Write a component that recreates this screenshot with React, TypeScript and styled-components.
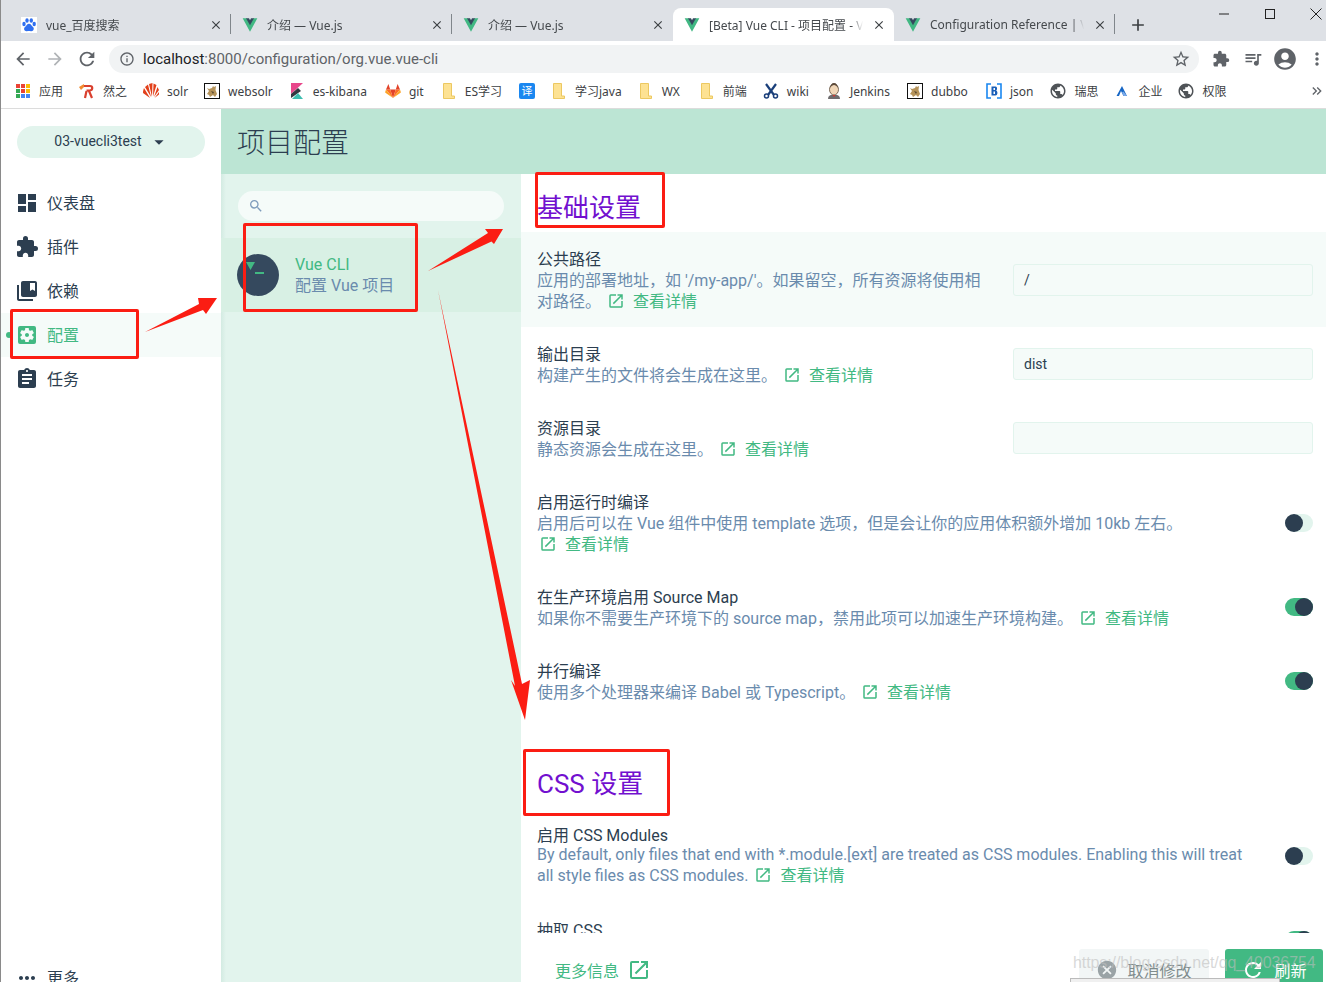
import React from "react";
import styled, { createGlobalStyle } from "styled-components";
import {
  MdDashboard, MdExtension, MdCollectionsBookmark, MdSettingsApplications, MdAssignment, MdMoreHoriz,
  MdOpenInNew, MdSearch, MdRefresh, MdCancel, MdClose, MdArrowBack, MdArrowForward, MdInfoOutline,
  MdStarBorder, MdQueueMusic, MdAccountCircle, MdMoreVert, MdAdd, MdArrowDropDown, MdPublic, MdKeyboardDoubleArrowRight,
} from "react-icons/md";

const Global = createGlobalStyle`
  html, body { margin: 0; padding: 0; height: 982px; overflow: hidden; background: #fff; }
  * { box-sizing: border-box; }
  #root { height: 982px; }
`;

const FONT = `Roboto, "Noto Sans CJK SC", sans-serif`;
const UIFONT = `"Noto Sans", "Noto Sans CJK SC", sans-serif`;

const Root = styled.div`
  position: relative;
  width: 1326px;
  height: 982px;
  overflow: hidden;
  display: flex;
  flex-direction: column;
  font-family: ${FONT};
  color: #2c3e50;
  &::before {
    content: "";
    position: absolute;
    left: 0; top: 0; bottom: 0;
    width: 1px;
    background: #8a8a8a;
    z-index: 5;
  }
`;

/* browser chrome */
const TabBar = styled.div`
  height: 41px;
  flex: none;
  background: #dee1e6;
  display: flex;
  align-items: flex-end;
  padding-left: 10px;
`;
const Tab = styled.div<{ $active?: boolean; $noSep?: boolean }>`
  position: relative;
  width: 221px;
  height: 33px;
  display: flex;
  align-items: center;
  padding: 0 8px 0 11px;
  gap: 9px;
  font: 12px ${UIFONT};
  color: #45494d;
  background: ${(p) => (p.$active ? "#fff" : "transparent")};
  border-radius: 8px 8px 0 0;
  &::after {
    content: "";
    position: absolute;
    right: 0; top: 6px;
    height: 20px;
    width: 1px;
    background: ${(p) => (p.$noSep ? "transparent" : "#80868b")};
  }
`;
const TabTitle = styled.span`
  flex: 1;
  min-width: 0;
  white-space: nowrap;
  overflow: hidden;
  mask-image: linear-gradient(90deg, #000 calc(100% - 12px), transparent);
`;
const TabClose = styled(MdClose)`
  flex: none;
  color: #3c4043;
`;
const NewTab = styled.div`
  width: 46px;
  height: 33px;
  display: flex;
  align-items: center;
  justify-content: center;
  color: #3c4043;
`;
const WinControls = styled.div`
  margin-left: auto;
  margin-right: -13px;
  align-self: flex-start;
  display: flex;
`;
const WinBtn = styled.div`
  width: 46px;
  height: 27px;
  display: flex;
  align-items: center;
  justify-content: center;
  color: #222;
`;
const Toolbar = styled.div`
  height: 34px;
  flex: none;
  display: flex;
  align-items: flex-start;
  padding: 4px 0 0 7px;
  background: #fff;
  position: relative;
`;
const NavBtn = styled.div<{ $muted?: boolean }>`
  width: 32px;
  height: 28px;
  flex: none;
  display: flex;
  align-items: center;
  justify-content: center;
  color: ${(p) => (p.$muted ? "#b0b3b6" : "#5f6368")};
`;
const AddressBar = styled.div`
  margin-left: 6px;
  width: 1090px;
  flex: none;
  height: 28px;
  border-radius: 14px;
  background: #f1f3f4;
  display: flex;
  align-items: center;
  padding: 0 8px 0 10px;
  gap: 8px;
  color: #5f6368;
`;
const Url = styled.div`
  flex: 1;
  font: 15px ${FONT};
  color: #5f6368;
  white-space: nowrap;
  b { font-weight: 400; color: #202124; }
`;
const ToolIcons = styled.div`
  display: flex;
  flex: none;
  align-items: center;
  height: 28px;
  margin-left: 6px;
  color: #5f6368;
`;
const ToolIcon = styled.div`
  width: 32px;
  display: flex;
  justify-content: center;
`;
const BookmarkBar = styled.div`
  height: 34px;
  flex: none;
  background: #fff;
  border-bottom: 1px solid #dcdcdc;
  display: flex;
  align-items: center;
  padding: 0 0 1px 15px;
  position: relative;
`;
const Bookmark = styled.div<{ $gap?: number }>`
  display: flex;
  align-items: center;
  gap: 8px;
  font: 12px ${UIFONT};
  color: #3c4043;
  margin-right: ${(p) => p.$gap ?? 17}px;
  white-space: nowrap;
`;
const BookmarkMore = styled.div`
  position: absolute;
  right: 1px;
  top: 8px;
  color: #5f6368;
  display: flex;
`;

const Fav = styled.svg`
  flex: none;
  display: block;
`;
const Translate = styled.span`
  width: 16px;
  height: 16px;
  flex: none;
  border-radius: 2px;
  background: #1a87f0;
  color: #fff;
  font-size: 11px;
  line-height: 16px;
  text-align: center;
`;

/* page */
const Page = styled.div`
  flex: 1;
  min-height: 0;
  display: flex;
`;
const Sidebar = styled.nav`
  width: 221px;
  flex: none;
  overflow: hidden;
  padding-top: 17px;
`;
const ProjectSelect = styled.div`
  margin: 0 16px 23px 17px;
  height: 32px;
  border-radius: 16px;
  background: #e2f4ed;
  display: flex;
  align-items: center;
  justify-content: center;
  font-size: 14px;
  padding-left: 2px;
  gap: 6px;
`;
const ProjectName = styled.span`
  padding-bottom: 2px;
`;
const NavItem = styled.div<{ $active?: boolean; $push?: number }>`
  position: relative;
  height: 44px;
  display: flex;
  align-items: center;
  padding-left: 15px;
  gap: 8px;
  font-size: 16px;
  margin-top: ${(p) => p.$push ?? 0}px;
  color: ${(p) => (p.$active ? "#42b983" : "#2c3e50")};
  background: ${(p) => (p.$active ? "#f5fbf9" : "transparent")};
  ${(p) =>
    p.$active
      ? `&::before { content: ""; position: absolute; left: 6px; top: 19px; width: 6px; height: 6px; border-radius: 50%; background: #42b983; }`
      : ""}
`;
const NavLabel = styled.span`
  padding-bottom: 2px;
`;
const Main = styled.main`
  flex: 1;
  min-width: 0;
  display: flex;
  flex-direction: column;
`;
const Header = styled.header`
  height: 65px;
  flex: none;
  background: #bce5d4;
  display: flex;
  align-items: center;
  padding: 0 0 2px 16px;
  font-size: 28px;
  font-weight: 300;
  color: #2c3e50;
`;
const Body = styled.div`
  flex: 1;
  min-height: 0;
  display: flex;
`;
const ListPane = styled.aside`
  width: 300px;
  flex: none;
  background: linear-gradient(90deg, #d3ebe2 0, #e2f4ed 5px);
  padding-top: 17px;
`;
const SearchBox = styled.div`
  margin: 0 17px 17px 17px;
  height: 30px;
  border-radius: 15px;
  background: #f5fbf9;
  display: flex;
  align-items: center;
  padding-left: 10px;
  color: #7f9cbc;
`;
const ListItem = styled.div`
  height: 74px;
  background: #d8f0e4;
  display: flex;
  align-items: center;
  padding-left: 16px;
  gap: 16px;
`;
const ItemText = styled.div`
  font-size: 16px;
  line-height: 21px;
`;
const ItemName = styled.div`
  color: #42b983;
`;
const ItemDesc = styled.div`
  color: #6a8bad;
`;
const Content = styled.section`
  flex: 1;
  min-width: 0;
  display: flex;
  flex-direction: column;
`;
const Scroll = styled.div`
  flex: 1;
  min-height: 0;
  overflow: hidden;
`;
const SectionTitle = styled.h2<{ $gap?: number }>`
  margin: ${(p) => p.$gap ?? 0}px 0 0;
  padding: 17px 16px 7px;
  font-size: 26px;
  line-height: 34px;
  font-weight: 400;
  color: #7210cf;
`;
const Row = styled.div<{ $selected?: boolean }>`
  display: flex;
  align-items: center;
  padding: 17px 13px 15px 16px;
  background: ${(p) => (p.$selected ? "#f5fbf9" : "transparent")};
`;
const RowText = styled.div`
  flex: 1;
  min-width: 0;
  margin-right: 24px;
  font-size: 16px;
  line-height: 21px;
`;
const RowTitle = styled.div`
  color: #2c3e50;
`;
const RowDesc = styled.div<{ $latin?: boolean }>`
  color: #6a8bad;
  margin: ${(p) => (p.$latin ? "-2px 0 2px" : "0")};
`;
const MoreLink = styled.span`
  color: #42b983;
  white-space: nowrap;
  svg {
    vertical-align: -3px;
    margin: 0 4px 0 2px;
  }
`;
const Input = styled.div`
  width: 300px;
  flex: none;
  height: 32px;
  margin-bottom: 2px;
  background: #f5fbf9;
  border: 1px solid #e2f4ed;
  border-radius: 3px;
  padding: 0 10px;
  font-size: 14px;
  line-height: 30px;
  color: #2c3e50;
`;
const Toggle = styled.div<{ $on?: boolean }>`
  width: 28px;
  height: 18px;
  margin-bottom: 2px;
  flex: none;
  border-radius: 9px;
  background: ${(p) => (p.$on ? "#42b983" : "#e2f4ed")};
  display: flex;
  justify-content: ${(p) => (p.$on ? "flex-end" : "flex-start")};
  &::after {
    content: "";
    width: 18px;
    height: 18px;
    border-radius: 50%;
    background: #2c3e50;
  }
`;
const Footer = styled.footer`
  height: 49px;
  flex: none;
  display: flex;
  align-items: flex-start;
  padding: 16px 3px 0 34px;
  gap: 16px;
`;
const FooterLink = styled.div`
  margin-right: auto;
  height: 42px;
  display: flex;
  align-items: center;
  gap: 8px;
  font-size: 16px;
  color: #42b983;
`;
const Button = styled.div<{ $primary?: boolean }>`
  width: ${(p) => (p.$primary ? 98 : 130)}px;
  height: 42px;
  border-radius: 3px;
  display: flex;
  align-items: center;
  justify-content: center;
  gap: 9px;
  font-size: 16px;
  background: ${(p) => (p.$primary ? "#42b983" : "#f2f6f6")};
  color: ${(p) => (p.$primary ? "#fff" : "#7f8c8d")};
`;

/* over-the-top annotations */
const RedBox = styled.div<{ $l: number; $t: number; $w: number; $h: number }>`
  position: absolute;
  left: ${(p) => p.$l}px;
  top: ${(p) => p.$t}px;
  width: ${(p) => p.$w}px;
  height: ${(p) => p.$h}px;
  border: 3px solid #fb1d13;
  border-radius: 2px;
  z-index: 3;
`;
const Arrows = styled.svg`
  position: absolute;
  left: 0;
  top: 0;
  z-index: 3;
  pointer-events: none;
`;
const Watermark = styled.div`
  position: absolute;
  left: 1073px;
  top: 953px;
  font: 16px/20px "Liberation Sans", sans-serif;
  letter-spacing: -0.09px;
  color: rgba(190, 190, 190, 0.6);
  white-space: nowrap;
  z-index: 4;
`;
const TaskStrip = styled.div`
  position: absolute;
  left: 1070px;
  top: 978px;
  width: 210px;
  height: 10px;
  background: #f0f0f0;
  border: 1px solid #bbb;
  z-index: 4;
`;

/* favicons */
const VueIcon = () => (
  <Fav width="16" height="16" viewBox="0 0 24 24">
    <path fill="#41b883" d="M1 2h6l5 8.6L17 2h6L12 22z" />
    <path fill="#35495e" d="M6 2h4.5L12 5l1.500-3H18l-6 10.500z" />
  </Fav>
);
const BaiduIcon = () => (
  <Fav width="16" height="16" viewBox="0 0 16 16">
    <rect width="16" height="16" fill="#fff" />
    <g fill="#2f6ff0">
      <ellipse cx="3" cy="7" rx="1.700" ry="2.200" />
      <ellipse cx="6" cy="3.500" rx="1.700" ry="2.300" />
      <ellipse cx="10.300" cy="3.500" rx="1.700" ry="2.300" />
      <ellipse cx="13.200" cy="7" rx="1.700" ry="2.200" />
      <path d="M8 6.800c2 0 2.500 2 4 3.200 1.600 1.400.6 4.500-2 4.200-1.200-.2-2.500-.4-4 0-2.700.4-3.800-2.600-2-4.200C5.500 8.800 6 6.800 8 6.800z" />
    </g>
  </Fav>
);
const AppsIcon = () => (
  <Fav width="16" height="16" viewBox="0 0 16 16">
    {[
      ["#ea4335", "#ea4335", "#fbbc04"],
      ["#34a853", "#ea4335", "#fbbc04"],
      ["#34a853", "#4285f4", "#4285f4"],
    ].map((row, y) =>
      row.map((c, x) => <rect key={`${x}${y}`} x={1 + x * 5} y={1 + y * 5} width="4" height="4" fill={c} />),
    )}
  </Fav>
);
const RanzhiIcon = () => (
  <Fav width="16" height="16" viewBox="0 0 16 16">
    <path fill="none" stroke="#d9402f" strokeWidth="2.200" d="M6 15l1.500-7M5 3h6c3 0 3 4 0 4.500H7.500M10 8l3 7" />
    <path fill="#f28b30" d="M0 4l5-3v3L2 7z" />
  </Fav>
);
const SolrIcon = () => (
  <Fav width="16" height="16" viewBox="0 0 16 16">
    <path fill="#e2401b" d="M7 15L0 10c0-2 .500-4 1-5zM8 14L2 4l3-2.500zM9 14L6 1l3.500-1zM10 13.500L10.500 .5l3 1.500zM11 14l3.500-10L16 7zM11.500 15L16 9v2.500z" />
  </Fav>
);
const TomcatIcon = () => (
  <Fav width="16" height="16" viewBox="0 0 16 16">
    <rect x=".5" y=".5" width="15" height="15" fill="#fff" stroke="#111" />
    <path fill="#b5935a" d="M3 5l2 1 3-1 1-2 1 1 2-1-.5 4L13 11l-2 3-2-2-3 2-1-2-2-1 2-3z" />
    <path fill="#5a4a30" d="M7 8l3 1-1 2z" />
  </Fav>
);
const KibanaIcon = () => (
  <Fav width="16" height="16" viewBox="0 0 16 16">
    <path fill="#e8478b" d="M2 0h12L2 11z" />
    <path fill="#343741" d="M2 11L9 5l3 3-10 7z" />
    <path fill="#3ebeb0" d="M3 16l6-6 5 6z" />
  </Fav>
);
const GitlabIcon = () => (
  <Fav width="16" height="16" viewBox="0 0 16 16">
    <path fill="#e24329" d="M8 15L5.200 6.500h5.600z" />
    <path fill="#fc6d26" d="M8 15L1 6.500h4.200zM8 15l7-8.500h-4.200z" />
    <path fill="#fca326" d="M1 6.500L.2 9c-.1.300 0 .500.200.700L8 15zM15 6.500l.8 2.500c.1.300 0 .500-.2.700L8 15z" />
    <path fill="#e24329" d="M1 6.500h4.200L3.400 1zM15 6.500h-4.200L12.600 1z" />
  </Fav>
);
const FolderIcon = () => (
  <Fav width="16" height="16" viewBox="0 0 16 16">
    <path fill="#fde293" stroke="#ecc861" d="M2.500 .5h8v12.500h3v2.500h-11z" />
  </Fav>
);
const ScissorsIcon = () => (
  <Fav width="16" height="16" viewBox="0 0 16 16">
    <path fill="none" stroke="#1a3f7a" strokeWidth="2.200" d="M3 1l8 11M13 1L5 12" />
    <circle cx="3.500" cy="13" r="2" fill="none" stroke="#1a3f7a" strokeWidth="1.500" />
    <circle cx="12.500" cy="13" r="2" fill="none" stroke="#1a3f7a" strokeWidth="1.500" />
  </Fav>
);
const JenkinsIcon = () => (
  <Fav width="16" height="16" viewBox="0 0 16 16">
    <path fill="#6d6b6d" d="M2 16c0-3 2-4 3-4h6c1 0 3 1 3 4z" />
    <ellipse cx="8" cy="6.500" rx="4.500" ry="5.500" fill="#f0d6b7" stroke="#5c4a3a" strokeWidth=".8" />
    <path fill="#5c4a3a" d="M4 5c0-3 2-5 4-5s4 2 4 5c-1-2-3-3-4-3S5 3 4 5z" />
    <path fill="#d33833" d="M6.500 12h3L8 14z" />
  </Fav>
);
const JsonIcon = () => (
  <Fav width="16" height="16" viewBox="0 0 16 16">
    <path fill="none" stroke="#1a87f0" strokeWidth="1.600" d="M5 1H1v14h4M11 1h4v14h-4" />
    <path fill="#1a5fb8" d="M5.500 3.500h4c2 0 2 3.500.5 4 2 .5 2 5-.5 5h-4zM7.500 5v2h1.500V5zm0 3.500V11h1.500V8.500z" fillRule="evenodd" />
  </Fav>
);
const CompanyIcon = () => (
  <Fav width="16" height="16" viewBox="0 0 16 16">
    <path fill="#1666c5" d="M8 3l5 10H9.500L7 8l-2 5H2.500z" />
    <path fill="#7aa9e8" d="M9.500 13L8 9.500l1.500-1L13 13z" />
  </Fav>
);
const GlobeIcon = () => <MdPublic size={18} color="#4f5357" style={{ margin: "-1px" }} />;
const CliIcon = () => (
  <Fav width="42" height="42" viewBox="0 0 42 42">
    <circle cx="21" cy="21" r="21" fill="#35495e" />
    <path fill="#42b983" d="M9 8h9l-4.500 8z" />
    <rect x="18" y="18" width="9" height="2" fill="#42b983" />
  </Fav>
);
const MinimizeIcon = () => (
  <Fav width="12" height="12" viewBox="0 0 12 12"><path d="M1 6h10" stroke="#222" fill="none" /></Fav>
);
const MaximizeIcon = () => (
  <Fav width="12" height="12" viewBox="0 0 12 12"><rect x="1.500" y="1.500" width="9" height="9" stroke="#222" fill="none" /></Fav>
);
const WinCloseIcon = () => (
  <Fav width="12" height="12" viewBox="0 0 12 12"><path d="M.5 .5l11 11M11.500 .5l-11 11" stroke="#222" fill="none" /></Fav>
);

const bookmarks: [React.ReactNode, string, number?][] = [
  [<AppsIcon />, "应用", 16],
  [<RanzhiIcon />, "然之", 16],
  [<SolrIcon />, "solr", 16],
  [<TomcatIcon />, "websolr", 16],
  [<KibanaIcon />, "es-kibana", 18],
  [<GitlabIcon />, "git", 17],
  [<FolderIcon />, "ES学习", 17],
  [<Translate>译</Translate>, "", 16],
  [<FolderIcon />, "学习java", 16],
  [<FolderIcon />, "WX", 19],
  [<FolderIcon />, "前端", 16],
  [<ScissorsIcon />, "wiki", 17],
  [<JenkinsIcon />, "Jenkins", 17],
  [<TomcatIcon />, "dubbo", 18],
  [<JsonIcon />, "json", 17],
  [<GlobeIcon />, "瑞思", 16],
  [<CompanyIcon />, "企业", 16],
  [<GlobeIcon />, "权限"],
];

const Detail = () => (
  <MoreLink>
    <MdOpenInNew size={18} />
    {" "}查看详情
  </MoreLink>
);

export default function App() {
  return (
    <Root>
      <Global />
      <TabBar>
        <Tab>
          <BaiduIcon />
          <TabTitle>vue_百度搜索</TabTitle>
          <TabClose size={14} />
        </Tab>
        <Tab>
          <VueIcon />
          <TabTitle>介绍 — Vue.js</TabTitle>
          <TabClose size={14} />
        </Tab>
        <Tab $noSep>
          <VueIcon />
          <TabTitle>介绍 — Vue.js</TabTitle>
          <TabClose size={14} />
        </Tab>
        <Tab $active $noSep>
          <VueIcon />
          <TabTitle>[Beta] Vue CLI - 项目配置 - V</TabTitle>
          <TabClose size={14} />
        </Tab>
        <Tab>
          <VueIcon />
          <TabTitle>Configuration Reference | V</TabTitle>
          <TabClose size={14} />
        </Tab>
        <NewTab>
          <MdAdd size={20} />
        </NewTab>
        <WinControls>
          <WinBtn><MinimizeIcon /></WinBtn>
          <WinBtn><MaximizeIcon /></WinBtn>
          <WinBtn><WinCloseIcon /></WinBtn>
        </WinControls>
      </TabBar>
      <Toolbar>
        <NavBtn><MdArrowBack size={20} /></NavBtn>
        <NavBtn $muted><MdArrowForward size={20} /></NavBtn>
        <NavBtn><MdRefresh size={22} /></NavBtn>
        <AddressBar>
          <MdInfoOutline size={16} />
          <Url><b>localhost</b>:8000/configuration/org.vue.vue-cli</Url>
          <MdStarBorder size={20} />
        </AddressBar>
        <ToolIcons>
          <ToolIcon><MdExtension size={18} /></ToolIcon>
          <ToolIcon><MdQueueMusic size={20} /></ToolIcon>
          <ToolIcon><MdAccountCircle size={26} /></ToolIcon>
          <ToolIcon><MdMoreVert size={20} /></ToolIcon>
        </ToolIcons>
      </Toolbar>
      <BookmarkBar>
        {bookmarks.map(([icon, label, gap], i) => (
          <Bookmark key={i} $gap={gap}>
            {icon}
            {label ? <span>{label}</span> : null}
          </Bookmark>
        ))}
        <BookmarkMore><MdKeyboardDoubleArrowRight size={16} /></BookmarkMore>
      </BookmarkBar>
      <Page>
        <Sidebar>
          <ProjectSelect>
            <ProjectName>03-vuecli3test</ProjectName> <MdArrowDropDown size={22} />
          </ProjectSelect>
          <NavItem><MdDashboard size={24} /><NavLabel>仪表盘</NavLabel></NavItem>
          <NavItem><MdExtension size={24} /><NavLabel>插件</NavLabel></NavItem>
          <NavItem><MdCollectionsBookmark size={24} /><NavLabel>依赖</NavLabel></NavItem>
          <NavItem $active><MdSettingsApplications size={24} /><NavLabel>配置</NavLabel></NavItem>
          <NavItem><MdAssignment size={24} /><NavLabel>任务</NavLabel></NavItem>
          <NavItem $push={555}><MdMoreHoriz size={24} /><NavLabel>更多</NavLabel></NavItem>
        </Sidebar>
        <Main>
          <Header>项目配置</Header>
          <Body>
            <ListPane>
              <SearchBox><MdSearch size={16} /></SearchBox>
              <ListItem>
                <CliIcon />
                <ItemText>
                  <ItemName>Vue CLI</ItemName>
                  <ItemDesc>配置 Vue 项目</ItemDesc>
                </ItemText>
              </ListItem>
            </ListPane>
            <Content>
              <Scroll>
                <SectionTitle>基础设置</SectionTitle>
                <Row $selected>
                  <RowText>
                    <RowTitle>公共路径</RowTitle>
                    <RowDesc>应用的部署地址，如 '/my-app/'。如果留空，所有资源将使用相对路径。 <Detail /></RowDesc>
                  </RowText>
                  <Input>/</Input>
                </Row>
                <Row>
                  <RowText>
                    <RowTitle>输出目录</RowTitle>
                    <RowDesc>构建产生的文件将会生成在这里。 <Detail /></RowDesc>
                  </RowText>
                  <Input>dist</Input>
                </Row>
                <Row>
                  <RowText>
                    <RowTitle>资源目录</RowTitle>
                    <RowDesc>静态资源会生成在这里。 <Detail /></RowDesc>
                  </RowText>
                  <Input />
                </Row>
                <Row>
                  <RowText>
                    <RowTitle>启用运行时编译</RowTitle>
                    <RowDesc>启用后可以在 Vue 组件中使用 template 选项，但是会让你的应用体积额外增加 10kb 左右。 <Detail /></RowDesc>
                  </RowText>
                  <Toggle />
                </Row>
                <Row>
                  <RowText>
                    <RowTitle>在生产环境启用 Source Map</RowTitle>
                    <RowDesc>如果你不需要生产环境下的 source map，禁用此项可以加速生产环境构建。 <Detail /></RowDesc>
                  </RowText>
                  <Toggle $on />
                </Row>
                <Row>
                  <RowText>
                    <RowTitle>并行编译</RowTitle>
                    <RowDesc>使用多个处理器来编译 Babel 或 Typescript。 <Detail /></RowDesc>
                  </RowText>
                  <Toggle $on />
                </Row>
                <SectionTitle $gap={32}>CSS 设置</SectionTitle>
                <Row>
                  <RowText>
                    <RowTitle>启用 CSS Modules</RowTitle>
                    <RowDesc $latin>By default, only files that end with *.module.[ext] are treated as CSS modules. Enabling this will treat all style files as CSS modules. <Detail /></RowDesc>
                  </RowText>
                  <Toggle />
                </Row>
                <Row>
                  <RowText>
                    <RowTitle>抽取 CSS</RowTitle>
                    <RowDesc>&nbsp;</RowDesc>
                  </RowText>
                  <Toggle $on />
                </Row>
              </Scroll>
              <Footer>
                <FooterLink>更多信息 <MdOpenInNew size={24} /></FooterLink>
                <Button><MdCancel size={22} color="#9aa3a6" />取消修改</Button>
                <Button $primary><MdRefresh size={24} />刷新</Button>
              </Footer>
            </Content>
          </Body>
        </Main>
      </Page>
      <RedBox $l={10} $t={309} $w={129} $h={50} />
      <RedBox $l={243} $t={223} $w={175} $h={89} />
      <RedBox $l={535} $t={172} $w={130} $h={56} />
      <RedBox $l={523} $t={749} $w={147} $h={67} />
      <Arrows width="1326" height="982" viewBox="0 0 1326 982">
        <g fill="#fb1d13">
          <polygon points="145,332 199,304 198,298 217,298 206,314 203,310" />
          <polygon points="428,271 488,233 485,229 503,229 494,244 491.500,241.500" />
          <polygon points="438,290 522,684 530,680 525,720 511,680 515,686" />
        </g>
      </Arrows>
      <Watermark>https://blog.csdn.net/qq_40036754</Watermark>
      <TaskStrip />
    </Root>
  );
}
